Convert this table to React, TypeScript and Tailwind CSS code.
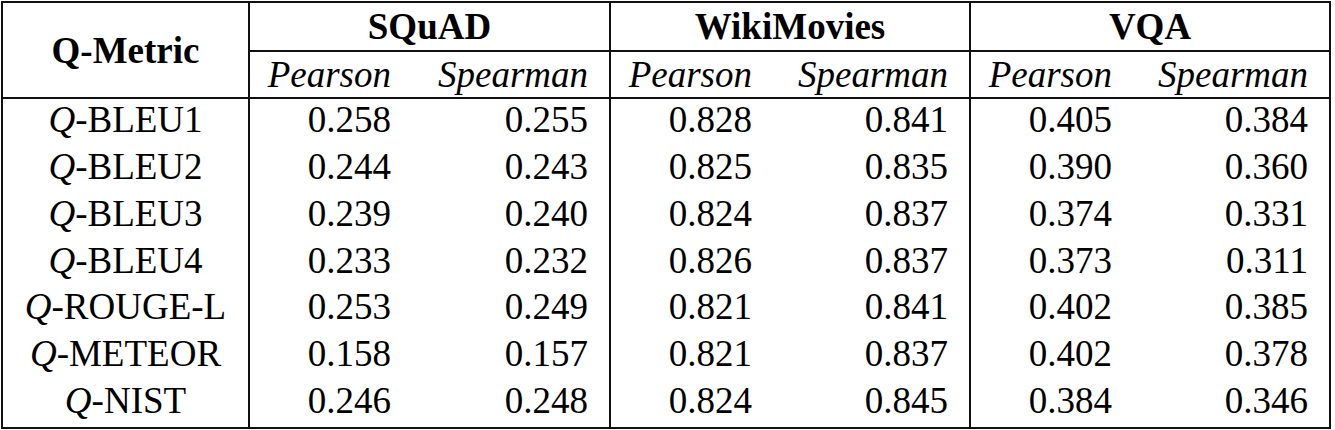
import React from "react";

const groups = ["SQuAD", "WikiMovies", "VQA"];

const rows: { name: string; vals: string[] }[] = [
  { name: "BLEU1", vals: ["0.258", "0.255", "0.828", "0.841", "0.405", "0.384"] },
  { name: "BLEU2", vals: ["0.244", "0.243", "0.825", "0.835", "0.390", "0.360"] },
  { name: "BLEU3", vals: ["0.239", "0.240", "0.824", "0.837", "0.374", "0.331"] },
  { name: "BLEU4", vals: ["0.233", "0.232", "0.826", "0.837", "0.373", "0.311"] },
  { name: "ROUGE-L", vals: ["0.253", "0.249", "0.821", "0.841", "0.402", "0.385"] },
  { name: "METEOR", vals: ["0.158", "0.157", "0.821", "0.837", "0.402", "0.378"] },
  { name: "NIST", vals: ["0.246", "0.248", "0.824", "0.845", "0.384", "0.346"] },
];

const groupClass = [
  "w-[361px] border-r-2 border-[#111]",
  "w-[360px] border-r-2 border-[#111]",
  "flex-1",
];

export default function App() {
  return (
    <div className="w-[1335px] h-[430px] bg-white pl-[1px] pt-[1px]">
      <div className="w-[1330px] h-[428px] border-2 border-[#111] flex flex-col [font-family:'Liberation_Serif','Times_New_Roman',serif] text-[37px] leading-none text-black">
        {/* header */}
        <div className="h-[96px] border-b-2 border-[#111] flex">
          <div className="w-[247px] border-r-2 border-[#111] flex items-center justify-center font-bold">
            Q-Metric
          </div>
          {groups.map((g, i) => (
            <div key={g} className={`${groupClass[i]} flex flex-col`}>
              <div className="h-[49px] border-b-2 border-[#111] flex items-center justify-center font-bold">
                {g}
              </div>
              <div className="flex-1 flex italic">
                <div className="w-[162px] flex items-center justify-end pr-[21px]">Pearson</div>
                <div className="flex-1 flex items-center justify-end pr-[21px]">Spearman</div>
              </div>
            </div>
          ))}
        </div>
        {/* data */}
        <div className="flex-1 flex flex-col">
          {rows.map((r) => (
            <div key={r.name} className="flex-1 flex">
              <div className="w-[247px] border-r-2 border-[#111] flex items-center justify-center pb-[6px]">
                <span>
                  <span className="italic">Q</span>-{r.name}
                </span>
              </div>
              {groups.map((g, i) => (
                <div key={g} className={`${groupClass[i]} flex`}>
                  <div className="w-[162px] flex items-center justify-end pr-[21px] pb-[6px]">
                    {r.vals[i * 2]}
                  </div>
                  <div className="flex-1 flex items-center justify-end pr-[21px] pb-[6px]">
                    {r.vals[i * 2 + 1]}
                  </div>
                </div>
              ))}
            </div>
          ))}
        </div>
      </div>
    </div>
  );
}
